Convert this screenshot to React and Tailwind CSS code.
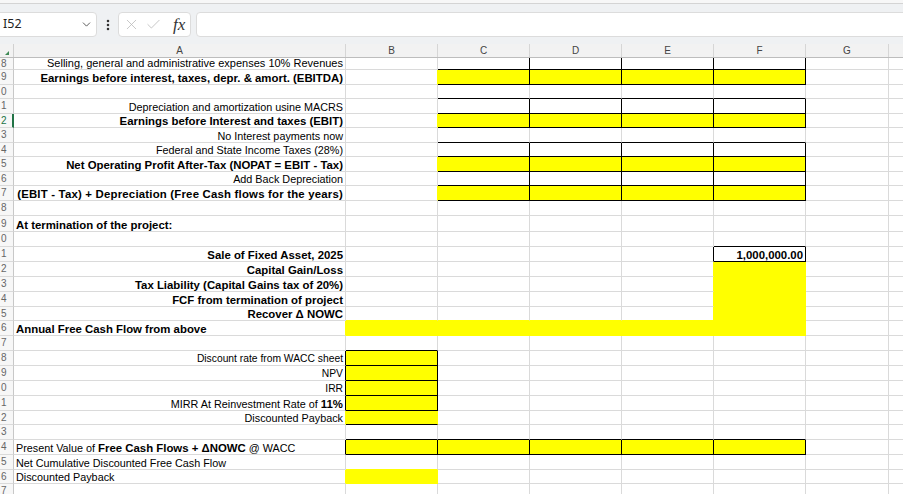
import { ChevronDown, EllipsisVertical, X, Check } from 'lucide-react';

const COLS = [
    { key: 'A', w: 'w-[332px]' },
    { key: 'B', w: 'w-[92px]' },
    { key: 'C', w: 'w-[92px]' },
    { key: 'D', w: 'w-[92px]' },
    { key: 'E', w: 'w-[92px]' },
    { key: 'F', w: 'w-[92px]' },
    { key: 'G', w: 'w-[83px]' },
    { key: 'H', w: 'w-[40px]' },
];

const HEIGHTS = { 12: 'h-[12px]', 14: 'h-[14px]', 15: 'h-[15px]', 16: 'h-[16px]' };

const RIGHT = { black: 'border-r-black', fill: 'border-r-[#ffff00]', grid: 'border-r-[#dadada]' };
const BOTTOM = { black: 'border-b-black', fill: 'border-b-[#ffff00]', grid: 'border-b-[#dadada]' };

const Y = { fill: true };
const four = (spec) => ({ C: spec, D: spec, E: spec, F: spec });
const five = (spec) => ({ B: spec, C: spec, D: spec, E: spec, F: spec });

const rows = [
    { n: 28, h: 12, a: 'Selling, general and administrative expenses 10% Revenues', size: 'text-[11px]', cells: four({ e: 'rb' }) },
    { n: 29, h: 15, a: 'Earnings before interest, taxes, depr. & amort. (EBITDA)', bold: true, cells: four({ fill: true, e: 'trb' }) },
    { n: 30, h: 14 },
    { n: 31, h: 15, a: 'Depreciation and amortization usine MACRS', cells: four({ e: 'trb' }) },
    { n: 32, h: 14, a: 'Earnings before Interest and taxes (EBIT)', bold: true, active: true, cells: four({ fill: true, e: 'trb' }) },
    { n: 33, h: 15, a: 'No Interest payments now' },
    { n: 34, h: 14, a: 'Federal and State Income Taxes (28%)', cells: four({ e: 'trb' }) },
    { n: 35, h: 15, a: 'Net Operating Profit After-Tax (NOPAT = EBIT - Tax)', bold: true, cells: four({ fill: true, e: 'trb' }) },
    { n: 36, h: 14, a: 'Add Back Depreciation', cells: four({ e: 'trb' }) },
    {
        n: 37,
        h: 15,
        a: '(EBIT - Tax) + Depreciation (Free Cash flows for the years)',
        bold: true,
        size: 'text-[11.4px] font-bold tracking-[0.2px]',
        cells: four({ fill: true, e: 'trb' }),
    },
    { n: 38, h: 15 },
    { n: 39, h: 16, a: 'At termination of the project:', bold: true, left: true },
    { n: 40, h: 15 },
    { n: 41, h: 15, a: 'Sale of Fixed Asset, 2025', bold: true, cells: { F: { e: 'trbl', text: '1,000,000.00' } } },
    { n: 42, h: 15, a: 'Capital Gain/Loss', bold: true, cells: { F: Y } },
    { n: 43, h: 15, a: 'Tax Liability (Capital Gains tax of 20%)', bold: true, cells: { F: Y } },
    { n: 44, h: 15, a: 'FCF from termination of project', bold: true, cells: { F: Y } },
    { n: 45, h: 14, a: 'Recover Δ NOWC', bold: true, cells: { F: Y } },
    { n: 46, h: 15, a: 'Annual Free Cash Flow from above', bold: true, left: true, cells: five(Y) },
    { n: 47, h: 15 },
    { n: 48, h: 15, a: 'Discount rate from WACC sheet', size: 'text-[10.3px]', cells: { B: { fill: true, e: 'trbl' } } },
    { n: 49, h: 15, a: 'NPV', size: 'text-[10.3px]', cells: { B: { fill: true, e: 'trbl' } } },
    { n: 50, h: 15, a: 'IRR', size: 'text-[10.3px]', cells: { B: { fill: true, e: 'trbl' } } },
    { n: 51, h: 15, a: <>MIRR At Reinvestment Rate of <b className="text-[11.4px]">11%</b></>, cells: { B: { fill: true, e: 'trbl' } } },
    { n: 52, h: 14, a: 'Discounted Payback', cells: { B: { fill: true, e: 'b' } } },
    { n: 53, h: 15 },
    {
        n: 54,
        h: 15,
        a: <>Present Value of <b className="text-[11.4px]">Free Cash Flows + ΔNOWC</b> @ WACC</>,
        left: true,
        cells: five({ fill: true, e: 'trbl' }),
    },
    { n: 55, h: 15, a: 'Net Cumulative Discounted Free Cash Flow', left: true },
    { n: 56, h: 14, a: 'Discounted Payback', left: true, cells: { B: Y } },
    { n: 57, h: 15 },
];

const cellOf = (ri, ci) => rows[ri]?.cells?.[COLS[ci]?.key];
const has = (c, edge) => !!c?.e?.includes(edge);

const rightBorder = (ri, ci) => {
    const cur = cellOf(ri, ci);
    const next = cellOf(ri, ci + 1);
    if (has(cur, 'r') || has(next, 'l')) return RIGHT.black;
    if (cur?.fill || next?.fill) return RIGHT.fill;
    return RIGHT.grid;
};

const bottomBorder = (ri, ci) => {
    const cur = cellOf(ri, ci);
    const below = cellOf(ri + 1, ci);
    if (has(cur, 'b') || has(below, 't')) return BOTTOM.black;
    if (cur?.fill || below?.fill) return BOTTOM.fill;
    return BOTTOM.grid;
};

const textSize = (row) => {
    if (row.size) return row.size;
    if (row.bold) return 'text-[11.4px] font-bold';
    return 'text-[10.8px]';
};

const FormulaBar = () => (
    <>
        <div className="h-[4px] bg-[#f7f7f7] border-b border-[#d4d4d4]" />
        <div className="h-[40px] bg-[#eff1f3] flex items-start pt-[8px]">
            <div className="-ml-[6px] w-[103px] h-[25px] bg-white border border-[#dcdcdc] rounded-[4px] flex items-center justify-between pl-[8px] pr-[3px]">
                <span className="text-[12.5px] text-[#222] font-['Noto_Sans',sans-serif]">I52</span>
                <ChevronDown size={13} strokeWidth={1.6} className="text-[#444]" />
            </div>
            <div className="w-[21px] h-[25px] flex items-center justify-center">
                <EllipsisVertical size={14} strokeWidth={2.4} className="text-[#333]" />
            </div>
            <div className="w-[73px] h-[25px] bg-white border border-[#dcdcdc] rounded-[4px] flex items-center pl-[4px]">
                <X size={17} strokeWidth={1.1} className="text-[#b8b8b8]" />
                <Check size={17} strokeWidth={1.1} className="text-[#b8b8b8] ml-[5px]" />
                <span className="ml-[11px] text-[17px] italic text-[#333] leading-none font-['Liberation_Serif',serif]">fx</span>
            </div>
            <div className="ml-[5px] flex-1 -mr-[6px] h-[25px] bg-white border border-[#dcdcdc] rounded-[4px]" />
        </div>
    </>
);

const HeaderRow = () => (
    <div className="flex h-[14px] bg-[#f2f2f2] border-b border-[#bdbdbd]">
        <div className="w-[14px] shrink-0 border-r border-[#d0d0d0]">
            <svg width="14" height="13" viewBox="0 0 14 13" className="block">
                <polygon points="9,7 9,11 5,11" fill="#3f8a55" />
            </svg>
        </div>
        {COLS.map((col) => (
            <div
                key={col.key}
                className={`${col.w} shrink-0 border-r border-[#d6d6d6] flex items-center justify-center text-[10px] text-[#444] leading-none`}
            >
                {col.key !== 'H' && col.key}
            </div>
        ))}
    </div>
);

const SheetRow = ({ row, ri }) => (
    <div className={`flex ${HEIGHTS[row.h]}`}>
        {/* row header, cropped so only the last digit shows */}
        <div
            className={`w-[14px] shrink-0 bg-[#f7f7f7] border-b border-b-[#dadada] flex items-center pl-[1px] text-[10px] leading-none ${
                row.active ? 'border-r-2 border-r-[#217346] text-[#217346]' : 'border-r border-r-[#c8c8c8] text-[#666]'
            }`}
        >
            {row.n % 10}
        </div>
        {COLS.map((col, ci) => {
            const cell = cellOf(ri, ci);
            const isA = col.key === 'A';
            return (
                <div
                    key={col.key}
                    className={`${col.w} shrink-0 border-r border-b ${rightBorder(ri, ci)} ${bottomBorder(ri, ci)} ${
                        cell?.fill ? 'bg-[#ffff00]' : 'bg-white'
                    } flex items-end whitespace-nowrap leading-[12px] text-black ${
                        isA && row.left ? 'justify-start pl-[2px]' : 'justify-end pr-[2px]'
                    } ${isA ? textSize(row) : ''}`}
                >
                    {isA && row.a && <span>{row.a}</span>}
                    {cell?.text && <span className="text-[11.4px] font-bold">{cell.text}</span>}
                </div>
            );
        })}
    </div>
);

export default function App() {
    return (
        <div className="w-[903px] h-[494px] overflow-hidden bg-white font-['Liberation_Sans',Arial,sans-serif]">
            <FormulaBar />
            <HeaderRow />
            {rows.map((row, ri) => (
                <SheetRow key={row.n} row={row} ri={ri} />
            ))}
        </div>
    );
}
